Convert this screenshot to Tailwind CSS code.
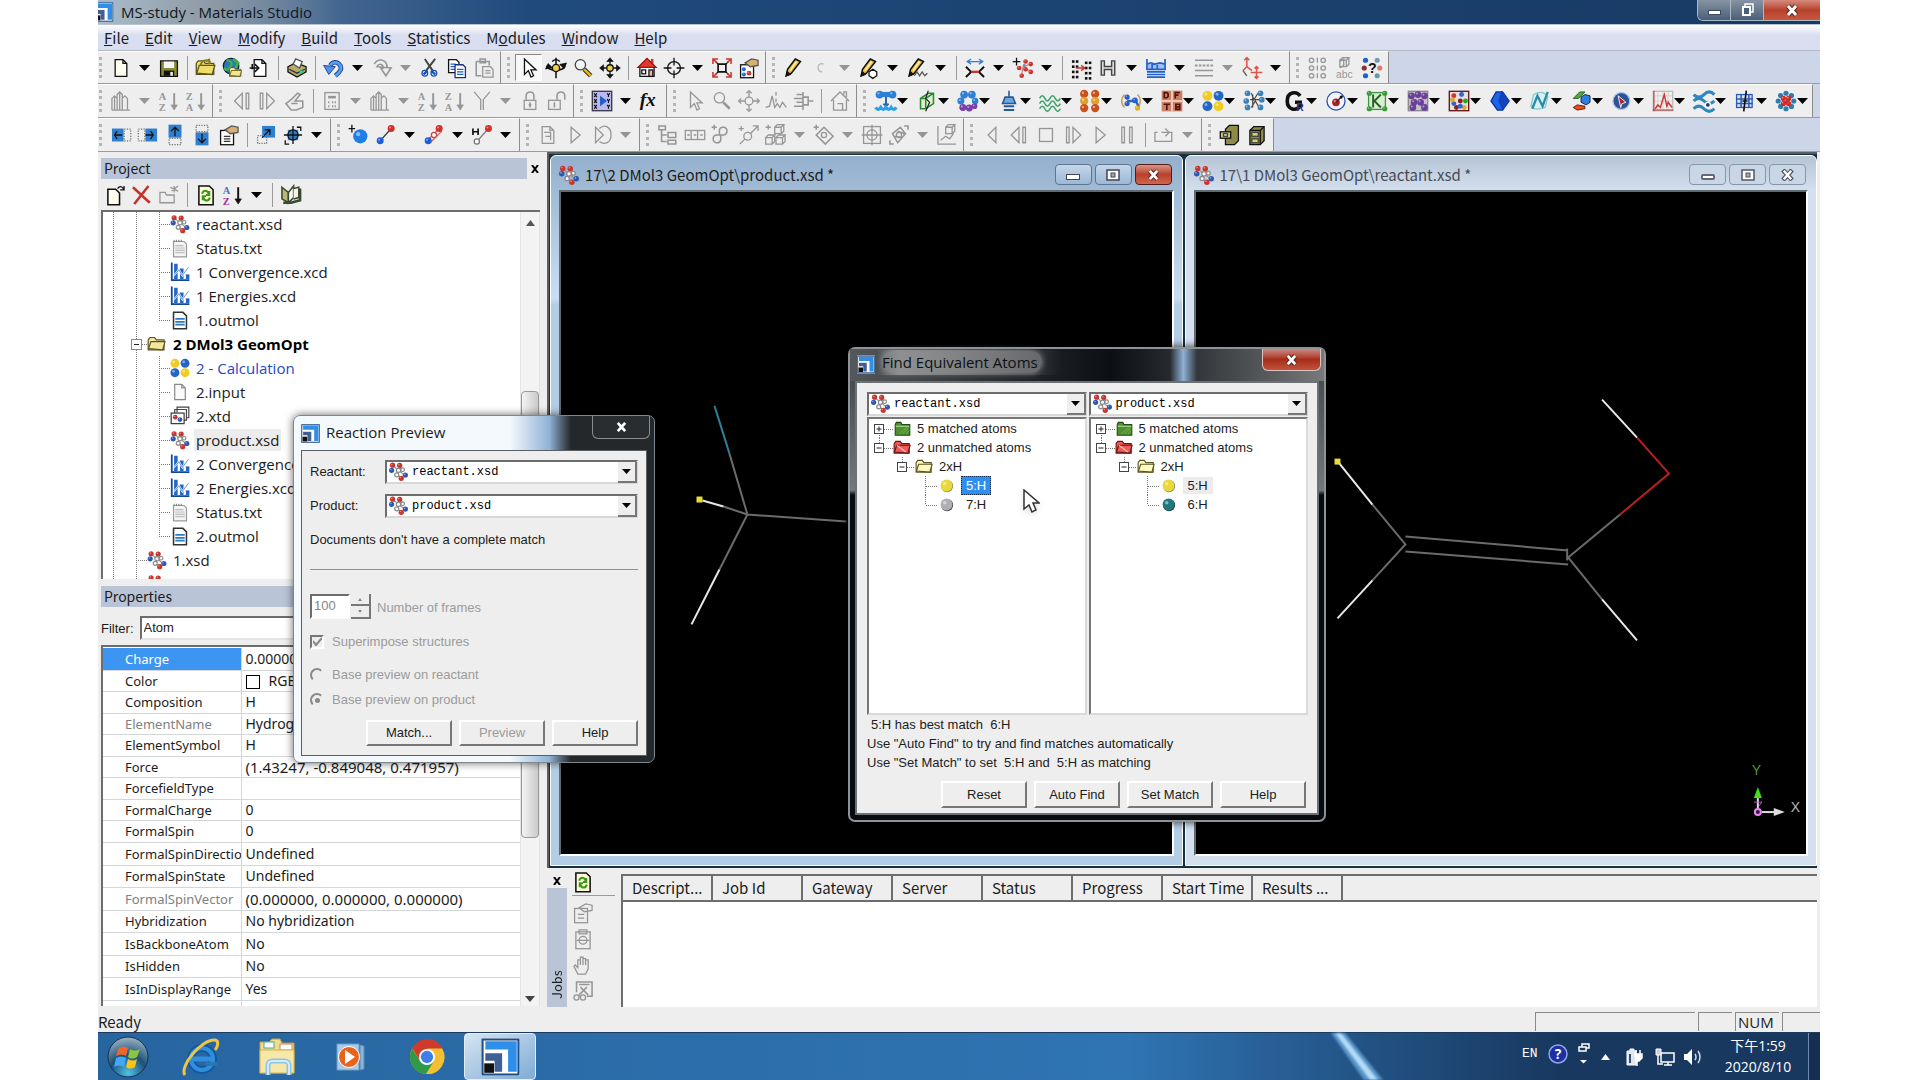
<!DOCTYPE html>
<html lang="en">
<head>
<meta charset="utf-8">
<title>MS-study - Materials Studio</title>
<script src="https://cdn.jsdelivr.net/npm/@tailwindcss/browser@4"></script>
</head>
<body class="bg-white font-['Open_Sans','Noto_Sans_CJK_SC',sans-serif] text-[15px] text-[#1c1c1c]">
<div class="pl-[98px] pr-[100px]">
<div class="relative flex h-screen min-h-[1080px] flex-col overflow-hidden bg-[#eeeeee]">

  <!-- Title bar -->
  <header class="flex h-[25px] shrink-0 items-start border-b border-[#b8c4d4] bg-linear-to-r from-[#6f8aa8] via-[#1f4a7c] via-25% to-[#173a63]">
    <div class="flex h-full items-center gap-[6px] bg-linear-to-r from-[#a9bccb] via-[#8f9ba6] via-45% to-transparent pr-[28px]">
      <svg class="h-[20px] w-[17px]" viewBox="4 0 15 18" data-icon="logo"></svg>
      <h1 class="text-[15px] leading-[24px] text-[#10161c]">MS-study - Materials Studio</h1>
    </div>
    <div class="ml-auto flex h-[21px] overflow-hidden rounded-bl-md border-b border-l border-[#aeb9c6]">
      <button aria-label="Minimize" class="flex w-[33px] items-center justify-center border-r border-[#aeb9c6] bg-linear-to-b from-[#8793a3] to-[#4a6079]"><span class="mt-[4px] h-[5px] w-[13px] border border-[#3b4a5c] bg-white"></span></button>
      <button aria-label="Restore" class="flex w-[33px] items-center justify-center border-r border-[#aeb9c6] bg-linear-to-b from-[#8793a3] to-[#4a6079]"><svg class="h-[15px] w-[15px]" viewBox="0 0 15 15"><path d="M5 4V1h8v8h-3" fill="none" stroke="#fff" stroke-width="1.500"/><rect x="3" y="4" width="7" height="8" fill="#4a6079" stroke="#fff" stroke-width="2"/></svg></button>
      <button aria-label="Close" class="flex w-[56px] items-center justify-center bg-linear-to-b from-[#d58a7c] via-[#b5412c] to-[#c9573f]"><svg class="h-[13px] w-[14px]" viewBox="0 0 14 13"><path d="M3 2l8 9M11 2l-8 9" stroke="#5a2a22" stroke-width="5"/><path d="M3 2l8 9M11 2l-8 9" stroke="#fff" stroke-width="3"/></svg></button>
    </div>
  </header>

  <!-- Menu bar -->
  <nav class="flex h-[26px] shrink-0 items-center gap-[16px] border-b border-[#b4b8c0] bg-linear-to-b from-white via-[#d9dff0] via-40% to-[#d8def0] pl-[6px] font-['Noto_Sans_CJK_SC',sans-serif] text-[15px] leading-[24px]">
    <a href="#"><u>F</u>ile</a><a href="#"><u>E</u>dit</a><a href="#"><u>V</u>iew</a><a href="#"><u>M</u>odify</a><a href="#"><u>B</u>uild</a><a href="#"><u>T</u>ools</a><a href="#"><u>S</u>tatistics</a><a href="#">M<u>o</u>dules</a><a href="#"><u>W</u>indow</a><a href="#"><u>H</u>elp</a>
  </nav>

  <!-- Toolbars, filled by the script -->
  <div id="bars" class="flex shrink-0 flex-col bg-[#ccd6e8]"></div>

  <!-- Work area -->
  <main class="flex min-h-0 flex-1">
    <aside class="flex w-[449px] shrink-0 flex-col pb-[4px] pl-[3px] pt-[6px]">
      <div class="flex h-[21px] items-center">
        <h2 class="h-full w-[426px] bg-[#b9c5d7] pl-[3px] font-['Noto_Sans_CJK_SC',sans-serif] text-[14px] leading-[20px]">Project</h2>
        <button aria-label="Close project panel" class="flex w-[16px] justify-center"><svg class="h-[8px] w-[8px]" viewBox="0 0 8 8"><path d="M1 0l6 8M7 0L1 8" stroke="#000" stroke-width="2"/></svg></button>
      </div>
      <div id="projbar" class="flex h-[31px] items-center"></div>
      <div class="mr-[7px] flex min-h-0 flex-1 overflow-hidden border-l-2 border-t-2 border-[#6d6d6d] bg-white">
        <ul id="tree" class="min-w-0 flex-1 overflow-hidden"></ul>
        <div class="flex w-[20px] flex-col items-center border-x border-[#e4e4e4] bg-[#f3f3f3]">
          <svg class="mt-[8px] h-[6px] w-[9px] shrink-0" viewBox="0 0 9 6"><path d="M0 6l4.500-6L9 6z" fill="#555"/></svg>
          <div class="mt-[165px] h-[150px] w-[18px] rounded-sm border border-[#989898] bg-linear-to-r from-[#f4f4f4] to-[#c9cacc]"></div>
        </div>
      </div>
      <h2 class="mt-[7px] h-[21px] w-[426px] shrink-0 bg-[#b9c5d7] pl-[3px] font-['Noto_Sans_CJK_SC',sans-serif] text-[14px] leading-[20px]">Properties</h2>
      <div class="flex h-[38px] shrink-0 items-center gap-[6px] font-['Liberation_Sans',sans-serif] text-[13px]">
        <label for="filter" class="pt-[6px]">Filter:</label>
        <input id="filter" value="Atom" class="mt-[3px] h-[24px] w-[380px] border-2 border-b-[#e4e4e4] border-l-[#6d6d6d] border-r-[#e4e4e4] border-t-[#6d6d6d] bg-white px-[2px]">
      </div>
      <div class="mr-[7px] flex h-[361px] shrink-0 overflow-hidden border-l-2 border-t-2 border-[#6d6d6d] bg-white pt-px">
        <div class="min-w-0 flex-1 overflow-hidden">
          <table class="w-full table-fixed border-collapse font-['Noto_Sans',sans-serif] text-[14px] leading-[18px]">
            <colgroup><col class="w-[138px]"><col></colgroup>
            <tbody id="props1"></tbody>
            <tbody id="props2"></tbody>
          </table>
        </div>
        <div class="flex w-[20px] flex-col items-center border-x border-[#e4e4e4] bg-[#f3f3f3]">
          <div class="h-[190px] w-[18px] rounded-sm border border-[#989898] bg-linear-to-r from-[#f4f4f4] to-[#c9cacc]"></div>
          <svg class="mb-[4px] mt-auto h-[6px] w-[10px]" viewBox="0 0 10 6"><path d="M0 0h10L5 6z" fill="#444"/></svg>
        </div>
      </div>
    </aside>

    <div class="flex min-w-0 flex-1 flex-col">
      <!-- Document windows -->
      <div class="mr-[3px] flex min-h-0 flex-1 gap-[2px] border-l-2 border-t-2 border-[#5a5e62] bg-[#17303c] pb-[2px] pl-px pt-px">
        <section class="flex min-w-0 flex-1 flex-col rounded-t-md border border-white bg-linear-to-b from-[#94b0cd] via-[#cadef2] via-20% to-[#b4cde6] to-21% px-[8px] pb-[9px]">
          <div class="flex h-[34px] shrink-0 items-center pt-[3px]">
            <svg class="h-[20px] w-[20px]" viewBox="0 0 16 16" data-icon="mol"></svg>
            <h2 class="ml-[6px] flex-1 truncate font-['Noto_Sans_CJK_SC',sans-serif] text-[15px] leading-[24px]">17\2 DMol3 GeomOpt\product.xsd *</h2>
            <div class="mr-[2px] flex gap-[3px]">
              <button aria-label="Minimize" class="flex h-[21px] w-[37px] items-center justify-center rounded-sm border border-[#5d7591] bg-linear-to-b from-[#c5d7ea] to-[#9cb7d5]"><span class="mt-[4px] h-[6px] w-[14px] border border-[#445] bg-white"></span></button>
              <button aria-label="Restore" class="flex h-[21px] w-[37px] items-center justify-center rounded-sm border border-[#5d7591] bg-linear-to-b from-[#c5d7ea] to-[#9cb7d5]"><svg class="h-[12px] w-[14px]" viewBox="0 0 14 12"><rect x="1" y="1" width="12" height="10" fill="#fff" stroke="#445" stroke-width="1.500"/><rect x="5" y="4" width="4" height="4" fill="#9ab" stroke="#445"/></svg></button>
              <button aria-label="Close" class="flex h-[21px] w-[37px] items-center justify-center rounded-sm border border-[#561c14] bg-linear-to-b from-[#d79587] via-[#b8402c] to-[#cf6550]"><svg class="h-[12px] w-[13px]" viewBox="0 0 14 13"><path d="M3 2l8 9M11 2l-8 9" stroke="#5a2a22" stroke-width="5"/><path d="M3 2l8 9M11 2l-8 9" stroke="#fff" stroke-width="3"/></svg></button>
            </div>
          </div>
          <div class="min-h-0 flex-1 border-2 border-b-white border-l-[#5f6a72] border-r-white border-t-[#5f6a72] bg-black">
            <svg class="h-full w-full" viewBox="561 191 610 663" fill="none" stroke-width="2">
              <path d="M714 405l15 48" stroke="#2f7f98"/><path d="M729 453l18 61 99 7M747 514l-28 55M747 514l-24-8" stroke="#6b6b6b"/>
              <path d="M719 569l-28 55M702 500l21 6" stroke="#e8e8e8"/><rect x="696" y="496" width="6" height="6" fill="#e8dc3a"/>
            </svg>
          </div>
        </section>
        <section class="flex min-w-0 flex-1 flex-col rounded-t-md border border-white bg-linear-to-b from-[#b6c4d5] to-[#d4e0ee] to-5% px-[8px] pb-[9px]">
          <div class="flex h-[34px] shrink-0 items-center pt-[3px]">
            <svg class="h-[20px] w-[20px]" viewBox="0 0 16 16" data-icon="mol"></svg>
            <h2 class="ml-[6px] flex-1 truncate font-['Noto_Sans_CJK_SC',sans-serif] text-[15px] leading-[24px] text-[#454c55]">17\1 DMol3 GeomOpt\reactant.xsd *</h2>
            <div class="mr-[2px] flex gap-[3px]">
              <button aria-label="Minimize" class="flex h-[21px] w-[37px] items-center justify-center rounded-sm border border-[#8796a8] bg-[#c9d6e6]"><span class="mt-[4px] h-[6px] w-[14px] rounded-xs border-2 border-[#667] bg-white"></span></button>
              <button aria-label="Restore" class="flex h-[21px] w-[37px] items-center justify-center rounded-sm border border-[#8796a8] bg-[#c9d6e6]"><svg class="h-[12px] w-[14px]" viewBox="0 0 14 12"><rect x="1" y="1" width="12" height="10" fill="#fff" stroke="#556" stroke-width="1.500"/><rect x="5" y="4" width="4" height="4" fill="#9ab" stroke="#556"/></svg></button>
              <button aria-label="Close" class="flex h-[21px] w-[37px] items-center justify-center rounded-sm border border-[#8796a8] bg-[#c9d6e6]"><svg class="h-[12px] w-[13px]" viewBox="0 0 14 13"><path d="M2 1l10 11M12 1L2 12" stroke="#556" stroke-width="5"/><path d="M3 2l8 9M11 2l-8 9" stroke="#fff" stroke-width="2.500"/></svg></button>
            </div>
          </div>
          <div class="min-h-0 flex-1 border-2 border-b-white border-l-[#5f6a72] border-r-white border-t-[#5f6a72] bg-black">
            <svg class="h-full w-full" viewBox="1195 191 610 663" fill="none" stroke-width="2">
              <path d="M1371 504l33 40-33 36M1404 536l163 14M1404 551l163 13M1566 548v12M1567 557l52-43M1567 557l34 42" stroke="#6b6b6b"/>
              <path d="M1338 463l33 41M1371 580l-35 38M1601 399l35 38M1601 599l35 41" stroke="#e8e8e8"/>
              <path d="M1619 514l49-41-32-36" stroke="#b92020"/><rect x="1333" y="458" width="6" height="6" fill="#e8dc3a"/>
              <path d="M1757 808v-10" stroke="#ddd"/><path d="M1757 787l-4 11h8z" fill="#3fe01a"/><path d="M1761 812h14" stroke="#ddd"/><path d="M1784 812l-11-4v8z" fill="#ddd"/>
              <path d="M1753 802h8l-3 4" stroke="#c050d0" stroke-width="1"/><circle cx="1757" cy="812" r="3" fill="#400a50" stroke="#e58af0"/>
              <text x="1751" y="775" fill="#4f9a2c" font-family="Liberation Sans" font-size="14">Y</text>
              <text x="1790" y="812" fill="#b8b8b8" font-family="Liberation Sans" font-size="14">X</text>
            </svg>
          </div>
        </section>
      </div>

      <!-- Jobs -->
      <section class="flex h-[142px] shrink-0 pb-[3px] pr-[3px] pt-[6px]">
        <div class="flex w-[20px] flex-col items-center">
          <button aria-label="Close jobs panel" class="flex h-[14px] shrink-0 items-center"><svg class="h-[8px] w-[8px]" viewBox="0 0 8 8"><path d="M1 0l6 8M7 0L1 8" stroke="#000" stroke-width="2"/></svg></button>
          <h2 class="flex w-full flex-1 items-center justify-start bg-[#b9c5d7] pt-[8px] font-['Noto_Sans_CJK_SC',sans-serif] text-[13px] leading-[20px] rotate-180 [writing-mode:vertical-rl]">Jobs</h2>
        </div>
        <div id="jobbar" class="ml-[5px] flex w-[49px] flex-col"></div>
        <div class="min-w-0 flex-1 border-l-2 border-t-2 border-[#6d6d6d] bg-white">
          <table class="w-full table-fixed border-collapse font-['Noto_Sans_CJK_SC',sans-serif] text-[15px]">
            <colgroup><col class="w-[89px]"><col class="w-[90px]"><col class="w-[90px]"><col class="w-[90px]"><col class="w-[90px]"><col class="w-[90px]"><col class="w-[90px]"><col class="w-[90px]"><col></colgroup>
            <thead><tr id="jobhead" class="h-[25px] border-b-2 border-[#6d6d6d] bg-[#eeeeee]"></tr></thead>
          </table>
        </div>
      </section>
    </div>
  </main>

  <!-- Status bar -->
  <footer class="flex h-[22px] shrink-0 items-center gap-[3px] font-['Noto_Sans_CJK_SC',sans-serif] text-[15px] leading-[20px]">
    <span class="flex-1 pt-px">Ready</span>
    <span class="h-[19px] w-[160px] border-l border-t border-[#8a8a8a]"></span>
    <span class="h-[19px] w-[34px] border-l border-t border-[#8a8a8a]"></span>
    <span class="h-[19px] w-[44px] border-l border-t border-[#8a8a8a] pl-[2px] font-['Open_Sans',sans-serif] leading-[18px]">NUM</span>
    <span class="h-[19px] w-[38px] border-l border-t border-[#8a8a8a]"></span>
  </footer>

  <!-- Taskbar -->
  <div class="flex h-[48px] shrink-0 border-t border-[#1b3a5e] bg-linear-to-r from-[#27659f] via-[#2f74b3] via-60% to-[#18385f] to-85%">
    <button aria-label="Start" class="flex w-[60px] items-center justify-center"><svg class="h-[42px] w-[44px]" viewBox="0 0 44 42" data-icon="start"></svg></button>
    <button aria-label="Internet Explorer" class="flex w-[86px] items-center justify-center"><svg class="h-[40px] w-[40px]" viewBox="0 0 40 40" data-icon="ie"></svg></button>
    <button aria-label="Windows Explorer" class="flex w-[68px] items-center justify-center"><svg class="h-[38px] w-[40px]" viewBox="0 0 40 38" data-icon="explorer"></svg></button>
    <button aria-label="Media Player" class="flex w-[78px] items-center justify-center"><svg class="h-[32px] w-[32px]" viewBox="0 0 32 32" data-icon="wmp"></svg></button>
    <button aria-label="Chrome" class="flex w-[74px] items-center justify-center"><svg class="h-[36px] w-[36px]" viewBox="0 0 38 38" data-icon="chrome"></svg></button>
    <button aria-label="Materials Studio" class="flex w-[72px] items-center justify-center rounded-sm border border-[#e3edf6] bg-linear-to-br from-[#d6e4f1] to-[#7fabd5]"><svg class="h-[38px] w-[39px]" viewBox="0 0 18 18" preserveAspectRatio="none" data-icon="logo"></svg></button>
    <svg class="ml-[790px] h-full w-[80px] blur-[1px]" viewBox="0 0 80 47" preserveAspectRatio="none"><path d="M5 0h14l38 47H38z" fill="#6fb0e6" opacity=".7"/><path d="M9 0h6l37 47h-8z" fill="#b5dcf8"/></svg>
    <div class="ml-auto flex items-center text-white">
      <span class="w-[26px] pb-[6px] font-['Liberation_Mono',monospace] text-[13px]">EN</span>
      <svg class="mb-[6px] h-[20px] w-[20px]" viewBox="0 0 20 20"><circle cx="10" cy="10" r="9" fill="#1c2fa5" stroke="#8fa6e0" stroke-width="1.500"/><text x="10" y="15" text-anchor="middle" font-size="14" font-weight="bold" fill="#fff" font-family="Open Sans">?</text></svg>
      <svg class="ml-[10px] mb-[8px] h-[22px] w-[12px]" viewBox="0 0 12 22"><path d="M4 5V2h7v4H8" fill="none" stroke="#fff" stroke-width="1.500"/><rect x="1" y="5" width="7" height="4" fill="none" stroke="#fff" stroke-width="1.500"/><path d="M2 18h7l-3.500 3.500z" fill="#fff"/></svg>
      <svg class="ml-[11px] h-[6px] w-[9px]" viewBox="0 0 9 6"><path d="M0 6l4.500-6L9 6z" fill="#fff"/></svg>
      <svg class="ml-[15px] h-[20px] w-[18px]" viewBox="0 0 18 20"><path d="M2 4h3V2h4v2h2v14H2z" fill="#dfe6ec" stroke="#fff"/><path d="M5 7v9" stroke="#38506e" stroke-width="2"/><path d="M9 7h8v4l-3 3h-2v5M11 3v4M15 3v4" fill="#fff" stroke="#fff" stroke-width="1.500"/></svg>
      <svg class="ml-[12px] h-[20px] w-[20px]" viewBox="0 0 20 20"><rect x="6" y="6" width="13" height="9" fill="#1d3c63" stroke="#fff" stroke-width="1.500"/><path d="M9 18h8M13 15v3M3 8v9h5" fill="none" stroke="#fff" stroke-width="1.500"/><path d="M1 2h5v6H1z" fill="#ccd" stroke="#fff"/></svg>
      <svg class="ml-[8px] h-[18px] w-[19px]" viewBox="0 0 19 18"><path d="M1 6h3l5-5v16l-5-5H1z" fill="#fff"/><path d="M12 6q2 3 0 6M15 3q4 6 0 12" fill="none" stroke="#cfdbe8" stroke-width="1.500"/></svg>
      <div class="ml-[11px] w-[90px] pb-[2px] text-center font-['Open_Sans','Noto_Sans_CJK_SC',sans-serif] text-[14px] leading-[21px]">下午1:59<br>2020/8/10</div>
      <button aria-label="Show desktop" class="ml-[5px] h-full w-[12px] self-stretch border-l border-[#6f8bab] bg-[#142f52]"></button>
    </div>
  </div>

  <!-- Reaction Preview dialog -->
  <div role="dialog" aria-label="Reaction Preview" class="absolute left-[195px] top-[415px] w-[362px] rounded-[7px] border border-[#7d868e] bg-linear-to-r from-[#f4f9fd] from-60% via-[#8fb2d6] via-71% to-[#25282b] to-77% px-[7px] pb-[6px] shadow-[0_0_8px_rgba(0,0,0,0.6)]">
    <div class="flex h-[34px] items-start">
      <svg class="mt-[8px] h-[19px] w-[19px]" viewBox="0 0 18 18" data-icon="logo"></svg>
      <h2 class="ml-[6px] mt-[4px] text-[15px] leading-[24px]">Reaction Preview</h2>
      <button aria-label="Close" class="-mr-[3px] ml-auto flex h-[23px] w-[58px] items-center justify-center rounded-b-md border border-t-0 border-[#8a8d90] bg-[#2a2d30]"><svg class="h-[12px] w-[13px]" viewBox="0 0 14 13"><path d="M3 2l8 9M11 2l-8 9" stroke="#fff" stroke-width="3"/></svg></button>
    </div>
    <div class="flex h-[306px] flex-col border border-[#5a5f64] bg-[#eeeeee] px-[8px] pt-[9px] font-['Liberation_Sans',sans-serif] text-[13px] leading-[18px]">
      <div class="flex items-center justify-between"><label for="rp1">Reactant:</label>
        <div class="relative w-[253px]"><select id="rp1" class="h-[24px] w-full appearance-none border-2 border-b-[#d8d8d8] border-l-[#6d6d6d] border-r-[#d8d8d8] border-t-[#6d6d6d] bg-white pl-[25px] font-['Liberation_Mono',monospace] text-[12px] leading-[18px] text-black"><option>reactant.xsd</option></select>
        <svg class="pointer-events-none absolute left-[4px] top-[2px] h-[19px] w-[19px]" viewBox="0 0 16 16" data-icon="mol"></svg>
        <span class="pointer-events-none absolute right-[1px] top-[2px] flex h-[21px] w-[19px] items-center justify-center border-b-2 border-r-2 border-[#777] bg-[#eeeeee]"><svg class="h-[5px] w-[9px]" viewBox="0 0 9 5"><path d="M0 0h9L4.500 5z"/></svg></span></div></div>
      <div class="mt-[10px] flex items-center justify-between"><label for="rp2">Product:</label>
        <div class="relative w-[253px]"><select id="rp2" class="h-[24px] w-full appearance-none border-2 border-b-[#d8d8d8] border-l-[#6d6d6d] border-r-[#d8d8d8] border-t-[#6d6d6d] bg-white pl-[25px] font-['Liberation_Mono',monospace] text-[12px] leading-[18px] text-black"><option>product.xsd</option></select>
        <svg class="pointer-events-none absolute left-[4px] top-[2px] h-[19px] w-[19px]" viewBox="0 0 16 16" data-icon="mol"></svg>
        <span class="pointer-events-none absolute right-[1px] top-[2px] flex h-[21px] w-[19px] items-center justify-center border-b-2 border-r-2 border-[#777] bg-[#eeeeee]"><svg class="h-[5px] w-[9px]" viewBox="0 0 9 5"><path d="M0 0h9L4.500 5z"/></svg></span></div></div>
      <p class="mt-[13px]">Documents don't have a complete match</p>
      <hr class="mt-[20px] border-t border-[#8f8f8f]">
      <div class="mt-[24px] flex items-center text-[#9b9b9b]">
        <input id="frames" value="100" disabled class="h-[25px] w-[40px] border-2 border-b-white border-l-[#6d6d6d] border-r-white border-t-[#6d6d6d] bg-white pb-[3px] pl-[2px] text-[13px] text-[#858585]">
        <div class="ml-[1px] flex w-[20px] flex-col">
          <button disabled aria-label="More frames" class="flex h-[12px] items-center justify-center border-b-2 border-r-2 border-[#777]"><svg class="h-[3px] w-[4px]" viewBox="0 0 4 3"><path d="M0 3l2-3 2 3z" fill="#888"/></svg></button>
          <button disabled aria-label="Fewer frames" class="flex h-[13px] items-center justify-center border-b-2 border-r-2 border-[#777]"><svg class="h-[3px] w-[4px]" viewBox="0 0 4 3"><path d="M0 0l2 3 2-3z" fill="#888"/></svg></button>
        </div>
        <label for="frames" class="ml-[6px] pt-[3px]">Number of frames</label>
      </div>
      <div class="relative mt-[14px] flex items-center text-[#9b9b9b]">
        <input id="sup" type="checkbox" checked disabled class="h-[14px] w-[14px] appearance-none border-2 border-b-white border-l-[#777] border-r-white border-t-[#777]">
        <svg class="absolute left-[3px] top-[4px] h-[9px] w-[9px]" viewBox="0 0 9 9"><path d="M0 4l3 4 6-7" fill="none" stroke="#888" stroke-width="2"/></svg>
        <label for="sup" class="ml-[8px]">Superimpose structures</label>
      </div>
      <div class="mt-[15px] flex items-center text-[#9b9b9b]">
        <input id="b1" name="base" type="radio" disabled class="h-[14px] w-[14px] appearance-none rounded-full border-2 border-b-[#eee] border-l-[#888] border-r-[#eee] border-t-[#888]">
        <label for="b1" class="ml-[8px]">Base preview on reactant</label>
      </div>
      <div class="relative mt-[7px] flex items-center text-[#9b9b9b]">
        <input id="b2" name="base" type="radio" checked disabled class="h-[14px] w-[14px] appearance-none rounded-full border-2 border-b-[#eee] border-l-[#888] border-r-[#eee] border-t-[#888]">
        <span class="absolute left-[5px] top-[7px] h-[5px] w-[5px] rounded-full bg-[#888]"></span>
        <label for="b2" class="ml-[8px]">Base preview on product</label>
      </div>
      <div class="mt-[11px] flex justify-end gap-[7px]">
        <button class="h-[26px] w-[86px] border-2 border-b-[#777] border-l-white border-r-[#777] border-t-white">Match...</button>
        <button disabled class="h-[26px] w-[86px] border-2 border-b-[#777] border-l-white border-r-[#777] border-t-white text-[#9b9b9b]">Preview</button>
        <button class="h-[26px] w-[86px] border-2 border-b-[#777] border-l-white border-r-[#777] border-t-white">Help</button>
      </div>
    </div>
  </div>

  <!-- Find Equivalent Atoms dialog -->
  <div role="dialog" aria-label="Find Equivalent Atoms" class="absolute left-[750px] top-[347px] w-[478px] rounded-[7px] border-2 border-[#8d9296] bg-linear-to-b from-[#3e4144] via-[#75787b] via-30% to-[#080c0f] to-31% px-[5px] pb-[5px] shadow-[0_0_8px_rgba(0,0,0,0.8)]">
    <div class="-mx-[5px] flex h-[32px] items-start bg-linear-to-r from-[#55585b] via-[#0c0f14] via-55% to-[#77797b] px-[5px]">
      <svg class="ml-[2px] mt-[6px] h-[19px] w-[18px]" viewBox="0 0 18 18" data-icon="logo"></svg>
      <h2 class="ml-[2px] mt-[1px] bg-linear-to-r from-transparent via-[#8e9091] via-12% to-[#8e9091]/0 pl-[5px] pr-[24px] text-[15px] leading-[25px] text-[#0d1114]"><span class="-mr-[4px] rounded-full bg-[#8e9091]/60 py-px pr-[4px] shadow-[0_0_6px_#8e9091]">Find Equivalent Atoms</span></h2>
      <div class="ml-auto h-full w-[27px] bg-linear-to-r from-transparent via-[#8fb0d6] to-transparent"></div>
      <button aria-label="Close" class="-mr-[2px] ml-[65px] flex h-[22px] w-[59px] items-center justify-center rounded-b-md border border-t-0 border-[#d9c4c0] bg-linear-to-b from-[#c98a82] via-[#a72c1a] to-[#c2523c]"><svg class="h-[12px] w-[13px]" viewBox="0 0 14 13"><path d="M3 2l8 9M11 2l-8 9" stroke="#5a2a22" stroke-width="5"/><path d="M3 2l8 9M11 2l-8 9" stroke="#fff" stroke-width="3"/></svg></button>
    </div>
    <div class="border-2 border-[#6c7176] bg-[#eeeeee] pb-[5px] pl-[10px] pr-[9px] pt-[9px] font-['Liberation_Sans',sans-serif] text-[13px] leading-[19px]">
      <div class="flex gap-[2px]">
        <div class="relative flex-1"><select aria-label="First document" class="h-[24px] w-full appearance-none border-2 border-b-[#d8d8d8] border-l-[#6d6d6d] border-r-[#d8d8d8] border-t-[#6d6d6d] bg-white pl-[25px] font-['Liberation_Mono',monospace] text-[12px] leading-[18px] text-black"><option>reactant.xsd</option></select>
        <svg class="pointer-events-none absolute left-[4px] top-[2px] h-[19px] w-[19px]" viewBox="0 0 16 16" data-icon="mol"></svg>
        <span class="pointer-events-none absolute right-[1px] top-[2px] flex h-[21px] w-[19px] items-center justify-center border-b-2 border-r-2 border-[#777] bg-[#eeeeee]"><svg class="h-[5px] w-[9px]" viewBox="0 0 9 5"><path d="M0 0h9L4.500 5z"/></svg></span></div>
        <div class="relative flex-1"><select aria-label="Second document" class="h-[24px] w-full appearance-none border-2 border-b-[#d8d8d8] border-l-[#6d6d6d] border-r-[#d8d8d8] border-t-[#6d6d6d] bg-white pl-[25px] font-['Liberation_Mono',monospace] text-[12px] leading-[18px] text-black"><option>product.xsd</option></select>
        <svg class="pointer-events-none absolute left-[4px] top-[2px] h-[19px] w-[19px]" viewBox="0 0 16 16" data-icon="mol"></svg>
        <span class="pointer-events-none absolute right-[1px] top-[2px] flex h-[21px] w-[19px] items-center justify-center border-b-2 border-r-2 border-[#777] bg-[#eeeeee]"><svg class="h-[5px] w-[9px]" viewBox="0 0 9 5"><path d="M0 0h9L4.500 5z"/></svg></span></div>
      </div>
      <div class="mt-px flex gap-[2px]">
        <ul id="atoms1" class="h-[298px] flex-1 border-2 border-b-[#dadada] border-l-[#777] border-r-[#dadada] border-t-[#777] bg-white"></ul>
        <ul id="atoms2" class="h-[298px] flex-1 border-2 border-b-[#dadada] border-l-[#777] border-r-[#dadada] border-t-[#777] bg-white"></ul>
      </div>
      <div class="whitespace-pre"><p class="pl-[4px]">5:H has best match  6:H</p><p>Use "Auto Find" to try and find matches automatically</p><p>Use "Set Match" to set  5:H and  5:H as matching</p></div>
      <div class="mr-[2px] mt-[9px] flex justify-end gap-[7px]">
        <button class="h-[27px] w-[86px] border-2 border-b-[#777] border-l-white border-r-[#777] border-t-white">Reset</button>
        <button class="h-[27px] w-[86px] border-2 border-b-[#777] border-l-white border-r-[#777] border-t-white">Auto Find</button>
        <button class="h-[27px] w-[86px] border-2 border-b-[#777] border-l-white border-r-[#777] border-t-white">Set Match</button>
        <button class="h-[27px] w-[86px] border-2 border-b-[#777] border-l-white border-r-[#777] border-t-white">Help</button>
      </div>
    </div>
  </div>

  <!-- Mouse pointer -->
  <svg class="pointer-events-none absolute left-[925px] top-[489px] h-[25px] w-[17px] drop-shadow-md" viewBox="0 0 17 25"><path d="M1 1v19l5-4 3 7 4-2-3-7h6z" fill="#fff" stroke="#333" stroke-width="1.500"/></svg>
</div>
</div>

<script>
const p = (d, s, w = 1, f = 'none') => `<path d="${d}" stroke="${s}" stroke-width="${w}" fill="${f}"/>`;
const c = (x, y, r, f, s = 'none') => `<circle cx="${x}" cy="${y}" r="${r}" fill="${f}" stroke="${s}"/>`;
const r = (x, y, w, h, f, s = 'none') => `<rect x="${x}" y="${y}" width="${w}" height="${h}" fill="${f}" stroke="${s}"/>`;
const t = (x, y, n, s, f, w = 'bold', fam = 'Liberation Sans') => `<text x="${x}" y="${y}" font-size="${n}" fill="${f}" font-weight="${w}" font-family="${fam}">${s}</text>`;
const G = '#969696', K = '#111', B = '#1f5fd0', R = '#c8352c';
const page = (s = K, f = '#fff') => p('M3.500 1.500h6l3 3v10h-9zM9.500 1.500v3h3', s, 1, f);
const folder = (f, s = '#5a5420') => p('M.5 13V4.500l1.500-2h4l1.500 2h6.500V13z', s, 1, f) + p('M.8 12l2-6h12l-2 7z', s, 1, f);
const ball = (x, y, q, f) => c(x, y, q, f) + c(x - q * .3, y - q * .3, q * .3, '#fff7');
const pencil = p('M2 14l1-5 6-8 4 2-7 9z', K, 1.200, '#e8c040') + p('M5 10l5-7', '#fff3a0', 1.200) + p('M2 14l1-3 2 2z', K, 1, K);
const cube = (x, y, s = G, f = 'none') => p(`M${x} ${y + 2}h5v5h-5zM${x} ${y + 2}l2-2h5l-2 2M${x + 7} ${y}v5l-2 2`, s, 1, f);
const az = (a, b, s1, s2, s3) => t(0, 7, 8, a, s1, 'bold', 'Liberation Serif') + t(0, 15.500, 8, b, s2, 'bold', 'Liberation Serif') + p('M12 2v11', s3, 1.500) + p('M9.500 11h5l-2.500 4z', s3, .5, s3);
const I = {
  logo: r(0, 0, 18, 18, '#fff') + r(.7, .7, 16.600, 16.600, 'none', '#1f4e86') + p('M2 3.500h12.500V16', '#2f8fe8', 4) + p('M2 9h6v7', '#3f5f95', 3.500) + p('M2 6.200h9.300V16', '#fff', 1) + r(1.500, 12, 4.500, 4.500, K),
  mol: p('M3 3l5 4 3-2M8 7l-1 4 3 2M8 7l5 4', '#999') + ball(3, 2.700, 2.200, R) + ball(9, 2.900, 2.200, R) + ball(2.200, 7, 2.200, '#2f57b0') + ball(13.800, 11, 2.200, '#2f57b0') + c(8, 7, 1.800, '#fff', '#888') + c(6.500, 10.800, 1.700, '#fff', '#888') + c(11.500, 6.500, 1.500, '#fff', '#888') + ball(10.300, 13.700, 2.200, R),
  page: page(K, '#fffef0'), blank: page('#888', '#fafafa'),
  save: p('M1.500 2.500h13v12h-13z', K, 1, '#8a8a30') + r(4, 3, 8, 5, '#f4f4f4') + r(4, 10, 8, 4, K) + r(9, 11, 2, 3, '#eee'),
  open: folder('#f0dc6a') + p('M4 6c0-4 5-5 7-3l-1 2M8 3l3-2', '#8a7a10', 1.500), folder: folder('#f3e6a0'), folderO: folder('#fffbc0'),
  folderG: p('M1.500 14V4.500l1-2h4l1 2h7V14z', '#234a12', 1, '#4f8f30') + p('M2 6h12', '#a8d890', 1) + p('M8 13l6-6M11 13l3-3M5 13l7-6', '#7db860', .7), folderR: folder('#f05a55', '#6a1512') + p('M3 6l8 6', '#ffc0b8', 1),
  web: c(6.500, 6.500, 6, '#2c78b0', '#124') + p('M3 2c3 0 5 2 3 5s-3 3-5 1M8 1l4 3-2 4', '#3fae4f', 2) + '<g transform="translate(5 6) scale(.65)">' + folder('#f5e58a') + '</g>',
  docin: page() + p('M0 8h6M2 5v4M4 5l3 3-3 3', K, 1.200), print: p('M1 7l6-3 8 3v4l-7 4-7-4z', K, 1, '#b5ae6a') + p('M5 5l2-4 5 2-2 5z', '#555', 1, '#fff') + p('M2 9l6 3 6-3', '#333') + r(10, 10, 3, 2, '#3c9'),
  undo: p('M9 14c4-3 6-6 3-9c-2-2-5-2-7 1', '#1a3f90', 3.500) + p('M9 14c4-3 6-6 3-9c-2-2-5-2-7 1', '#5a9cf2', 2.200) + p('M0 6l9 1-5 6z', '#1a3f90', .7, '#4f93ee'), redo: p('M2 5c3-5 10-4 10 3M15 8l-4 6-4-6h2c0-3-3-4-5-1z', G, 1.200),
  cut: p('M4 1l6 9M12 1L5 10', '#444', 1.500) + c(4, 12, 2.200, 'none', '#1b50b8') + c(11, 12, 2.200, 'none', '#1b50b8') + p('M3 13l3-3M12 13l-3-3', '#1b50b8', 1.800),
  copy: p('M1.500 1.500h6l2 2v8h-8z', K, 1, '#fff') + p('M3 5h4M3 7h4M3 9h4', B) + p('M6.500 5.500h6l2 2v8h-8z', '#1c2f80', 1, '#fff') + p('M8 9h5M8 11h5M8 13h5', B),
  paste: p('M2 3h10v3M2 3v11h4M5 1h4v3H5z', G, 1.200) + p('M7 7h6l2 2v6H7zM9 10h4M9 12h4', G),
  ptr: p('M4.500 1v12l3-3 2 5 2-1-2-4.500h4z', K, 1, '#fff'), gptr: p('M4.500 1v12l3-3 2 5 2-1-2-4.500h4z', G),
  rot: p('M8 0v16M1 6c0 5 14 5 14 0', K, 1.200) + c(8, 8, 2.800, '#f0d040', K) + p('M5 3q3-3 6 0', K) + p('M0 9l2-4 3 3M11 5l3 3 2-4', K, 1, K),
  zoom: p('M9 9l5 5', '#222', 3.500) + p('M9 9l5 5', '#e0b820', 2) + c(6, 5.500, 4, '#f0f6fa', '#444'), gzoom: p('M9 9l5 5', G, 2) + c(6, 5.500, 4, 'none', G),
  move: p('M8 1v14M1 8h14', K) + p('M8 0l2.500 3h-5zM8 16l2.500-3h-5zM0 8l3-2.500v5zM16 8l-3-2.500v5z', K, .5, K) + c(8, 8, 2.500, '#f0d040', K),
  gmove: p('M8 1v14M1 8h14M6 2l2-2 2 2M6 14l2 2 2-2M2 6L0 8l2 2M14 6l2 2-2 2', G) + c(8, 8, 3, '#eee', G),
  home: r(11, 1, 2, 4, '#c33') + p('M2.500 7.500h11v7h-11z', K, 1, '#fff') + p('M1 7.500L8 .5l7 7z', '#911', 1, '#e03a2a') + r(9.500, 9.500, 3, 5, '#f0b0a8', K) + r(4, 9.500, 3, 3, '#fff', K),
  ghome: p('M1 8l7-7 7 7M3 7v8h10V7M6 10h4v5M11 3V1h2v4', G),
  target: c(8, 8, 5, 'none', K) + p('M8 0v6M8 10v6M0 8h6M10 8h6', K),
  fit: p('M5 5h6v6H5z', K, 1.300) + p('M5 5L3 3M11 5l2-2M5 11l-2 2M11 11l2 2', K) + p('M1 5V1h4M11 1h4v4M15 11v4h-4M5 15H1v-4M1 1l3 3M15 1l-3 3M1 15l3-3M15 15l-3-3', R, 1.200),
  disp: r(1.500, 5.500, 10, 10, '#fff', K) + p('M5 4l5-3 5 1v4l-6 1z', '#555', 1, '#d8b070') + ball(4, 9, 1.500, B) + ball(8, 12, 1.800, R) + ball(4, 13, 1.500, B),
  pencil, gc: p('M10 5c-5-2-6 6-1 6', '#b5b5b5'), pring: pencil + p('M11 9l3 2v3l-3 2-3-2v-3z', K, 1, '#fff'), pzig: pencil + p('M6 14l2-3 2 3 2-3 2 3 2-2', '#555'),
  measure: p('M2 3h12M5 1L2 3l3 2M11 1l3 2-3 2', '#2f7fe0') + p('M1 7l4 4-4 4M15 7l-4 4 4 4', K, 1.500) + p('M5 11h6', R, 1.800),
  atoms: p('M0 3h6M3 0v6', K) + p('M8 7l6-2M8 7l-1 6M8 7l6 4', '#c88') + [[10, 3], [14, 5], [5, 8], [10, 9], [14, 11], [7, 14]].map(a => ball(a[0], a[1], 1.800, R)).join('') + ball(9, 6, 1.200, '#88a'),
  sym: [1, 4, 11, 14].map(x => [2, 6, 10, 14].map(y => r(x, y - 1 + (x % 3), 2, 2, K)).join('')).join('') + p('M4 8h7M8 6l3 2-3 2', R), hh: p('M4 2v12M12 2v12M4 8h8', '#444', 3.500) + p('M4 3v10M12 3v10M4 8h8', '#ddd', 1.300),
  tablei: r(1, 5, 14, 4, '#9fc0f0') + p('M1 1v8h14V1M1 5l3-1 3 1 4-1 4 1M5 4v5M9 4v5', B, 1.300) + p('M1 11h14M1 13h14M1 15h14', B, 1.300),
  dash: p('M1 2h14M1 10h14M1 14h14', G, 1.200) + '<path d="M1 6h14" stroke="#9a9a9a" stroke-width="1.500" stroke-dasharray="2 1"/>',
  redm: p('M4 0v7l-3 3M4 7l4 3M2 2l2-2 2 2', '#d8574d', 1.200) + p('M11.500 7v9M7 11.500h9M10 8.500l1.500-1.500L13 8.500M10 14.500l1.500 1.500 1.500-1.500', '#d8574d', 1.200) + p('M1 10l3 4', '#555'),
  s1: [3, 12].map(x => [2, 8, 14].map(y => c(x, y, 1.700, 'none', G)).join('')).join('') + p('M7.500 0v4M7.500 6v4M7.500 12v4', G), s2: cube(4, 0) + p('M4 3l3-2v5l-3 2', G) + t(1, 15.500, 8, 'abc', G, 'normal'),
  s3: c(3, 2, 2, B) + c(12, 2, 2, '#79b') + c(2, 8, 2, '#833') + c(14, 8, 2, '#d77') + c(3, 14, 2, B) + c(12, 14, 2, '#69a') + t(5, 12, 11, '?', K),
  bars: p('M1 15V6l2-2 2 2v9M5 15V3l2-2 2 2v12M9 6l2-2 2 2v9M1 15h14M3 5v10M7 2v13', G), az: az('A', 'Z', '#4a74c8', '#a03090', K), gaz: az('A', 'Z', G, G, G), gza: az('Z', 'A', G, G, G),
  bk: p('M9 2v12L3 8zM12 2h2v12h-2z', G), fw: p('M7 2v12l6-6zM2 2h2v12H2z', G), hand: p('M1 10l4-3 5-5 2 1-4 5h6v5l-5 2H5zM5 10h5', G, 1.200), calc: r(2.500, 1.500, 11, 13, 'none', G) + r(5, 4, 6, 2, G) + p('M5 9h1M8 9h1M10 9h1M5 12h1M8 12h1M10 12h1', G, 1.500),
  yy: p('M2 1l5 6v8M14 1L9 7v8', G), lock: r(3.500, 7.500, 9, 7, 'none', G) + p('M5 7V4c0-4 6-4 6 0v3M8 9v4M7 11h2', G, 1.200), unlock: r(1.500, 7.500, 9, 7, 'none', G) + p('M8 7V4c0-4 6-4 6 0v3M6 9v4', G, 1.200),
  xy: r(.5, .5, 15, 15, '#b9b8f0', '#334') + p('M2 2l2 3M4 2L2 5M2 6.500l2 3M4 6.500l-2 3M2 11l2 3M4 11l-2 3M12 2l1 1.500L14 2M13 3.500V5M12 6.500L13 8l1-1.500M13 8v1.500M12 11l1 1.500 1-1.500M13 12.500V14', K, .9) + p('M7 5l4 3-4 3z', B, 1, B), fx: t(0, 12, 15, '<tspan font-style="italic">fx</tspan>', K, 'bold', 'Liberation Serif'),
  peaks: p('M0 13l3-1 2-8 2 9 2-3 2 3 2-4 3 4M8 1v3M8 6v3', G), treeh: p('M8 1v14M3 3h5M1 6h7M3 9h5M1 12h7M8 5h4v6H8M12 8h4', G, 1.200),
  d1: p('M8 4v8M6 10l2 2 2-2', '#26a', 1.500) + p('M3 3h10', '#2d7fd6', 4) + ball(3, 3, 3, '#2d7fd6') + ball(13, 3, 3, '#2d7fd6') + p('M0 13q2 3 4 0q2 3 4 0q2 3 4 0q2 3 4 0', '#2d9fe6', 2.500),
  d2: p('M3 6l6-4h4v8l-6 4H3zM3 6h4v8M7 6l6-4', '#2c8a2c', 1.200, '#e0f0d8') + p('M9 0L7 6l3 3-3 7', '#222', .9), d3: ball(5, 3, 3, '#2d7fd6') + ball(11, 3, 3, '#2d7fd6') + ball(2.500, 8, 2.700, '#2d7fd6') + ball(13.500, 8, 2.500, '#2d7fd6') + ball(4, 13, 2.700, '#7a3fa8') + ball(9, 13.500, 2.700, '#7a3fa8') + ball(13, 12, 2.200, '#7a3fa8'),
  d4: p('M8 0v5M5 5h6l2 5H3z', '#245a9a', 1.200, '#6fa8d8') + p('M4 12h8M4 15h8', '#245a9a', 1.500), d5: p('M0 6q2-4 4 0t4 0t4 0t4 0M0 10q2-4 4 0t4 0t4 0t4 0M0 14q2-4 4 0t4 0t4 0t4 0', '#3fa06a', 1.200),
  d6: [3.5, 12].map(x => [2.500, 8, 13.500].map(y => ball(x, y, 3.200, y == 8 ? '#e0a030' : '#c8501c')).join('')).join(''), d7: p('M3 3C0 6 0 10 3 13M13 3c3 3 3 7 0 10', '#c8a060', 1.300) + p('M5 8h7M12 8l2 5', '#36a', 1.800) + ball(5, 5, 2, B) + ball(5, 10, 2, B) + ball(11, 7.500, 2.200, B) + ball(13, 13.500, 2, '#e0b020'),
  d8: r(0, 0, 16, 16, '#c98068') + p('M8 0v16M0 8h16', '#f0c8b8', 1.500) + p('M2 1.500v4h2l1-1v-2l-1-1zM10.500 6V1.500H14M10.500 3.500H13M1.500 10.500h5M4 10.500V15M11 10.500v4h3v-4zM11 12.500h3', '#5a1208', 1.300),
  calcn: ball(3.700, 4, 3.800, '#f0cc20') + ball(12.300, 4, 3.800, '#2465c8') + ball(3.700, 12, 3.800, '#2465c8') + ball(12.300, 12, 3.800, '#f0cc20') + c(8, 8, 1.500, '#fff'),
  d10: p('M6 2l2 5 3-5M5 7h7M6 13l3-5 3 5M7 3v10', '#444', .9) + [[3, 2], [13, 2], [2, 8], [14, 7], [3, 13], [13, 13]].map(a => ball(a[0], a[1], 2.200, '#3a80b8')).join(''), d11: p('M12 4C9 0 2 1 2 8s7 8 10 4V9H8', K, 2.800) + t(9, 15.500, 8, 'R', '#338'),
  d12: c(8, 8, 7, '#f4f6ff', '#2a4fb0') + ball(8, 9, 3, '#b02020') + p('M8 9l5-5', '#333', 1) + c(12, 5, 1.200, K), d13: r(1.500, 1.500, 13, 13, '#d8efd0', '#3a9a3a') + p('M5 3v10M11 3L6 8l5 5', '#285f28', 1.500) + [2, 14].map(x => [2, 14].map(y => ball(x, y, 2, '#3a9a3a')).join('')).join(''),
  d14: r(.5, .5, 15, 15, '#c4c0c8', '#888') + [[3, 4], [8, 3], [13, 4], [5, 9], [10, 9], [4, 13], [13, 13]].map(a => ball(a[0], a[1], 2.600, '#6a3f98')).join(''), d15: r(.5, .5, 15, 15, '#e8e0e0', '#5a1010') + [['#c33', 4, 4], ['#36c', 10, 3], ['#2a2', 13, 8], ['#822', 9, 8], ['#36c', 4, 10], ['#da2', 12, 13], ['#822', 6, 13], ['#36c', 9, 12], ['#da2', 3, 7]].map(a => c(a[1], a[2], 1.900, a[0])).join(''),
  d16: p('M5 1h5l5 7-5 7H6L1 8z', '#0a2f9a', 1, '#1e63e8') + p('M9 1L7 8l3 7h0l5-7-5-7z', '#0a3fc0', .5, '#1243b8'), d17: p('M3 3q8-4 11 2l-2 8q-8 3-11-1z', '#8cc', 1, '#d8f0f4') + p('M2 14L6 4l4 8 4-11', '#2a8aa8', 1.800),
  d18: p('M2 6l5-5h4L6 6z', '#252', .7, '#4fae3a') + p('M8 5l3-2 4 1v5l-3 2-4-2z', '#124', .7, '#2f7fe0') + p('M2 13l3-2 6 1v2l-6 1z', '#611', .7, '#e05020'), d19: c(7.500, 8, 6.500, '#2c5298', '#a8c0e0') + p('M5 4l6 5-3 1-1 3z', '#fff', .7, '#b02020'),
  d20: r(.5, .5, 15, 15, '#f4eeee', '#bbb') + p('M1 4h14M1 8h14M4 1v14M8 1v14M12 1v14', '#ccc', .6) + p('M0 15h16M1 0v16', '#a33', .8) + p('M2 14l2-3 2 2 3-10 2 9 1-3 3 4', '#c33', 1.100), d21: p('M0 3q4 4 8 0t8 0M0 8q4-4 8 0t8 0M0 14q4-4 8 0t8 0', '#2f86c0', 2.400) + c(11, 11, 2, '#247', '#fff'),
  d22: r(1.500, 3, 12, 10, '#d8e4f8', '#2a5ab8') + p('M1 6.500h13M1 10h13M5 3v10M11 3v10', '#2a5ab8', 1.200) + p('M9 0L8 8l-1 8M6 8h4', K, 1.300), d23: [0, 45, 90, 135, 180, 225, 270, 315].map(a => c((8 + 6 * Math.cos(a / 57.3)).toFixed(1), (8 + 6 * Math.sin(a / 57.3)).toFixed(1), 2, '#2f7cb0')).join('') + [[6, 6], [10, 6], [6, 10], [10, 10], [8, 8]].map(a => ball(a[0], a[1], 2, '#d02a28')).join(''),
  l1: r(1, 3, 9, 10, '#2f7fd0') + p('M3 8h6M5 5L3 8l2 3', K) + '<rect x="10.500" y="3.500" width="5" height="9" fill="none" stroke="#777" stroke-dasharray="1 1"/>', l2: r(6, 3, 9, 10, '#2f7fd0') + p('M6 8h6M10 5l2 3-2 3', K) + '<rect x=".5" y="3.500" width="5" height="9" fill="none" stroke="#777" stroke-dasharray="1 1"/>',
  l3: r(3, 0, 10, 10, '#2f7fd0') + p('M8 9V2M5 5l3-3 3 3', K) + '<rect x="3.500" y="10.500" width="9" height="5" fill="none" stroke="#777" stroke-dasharray="1 1"/>', l4: r(3, 6, 10, 10, '#2f7fd0') + p('M8 7v7M5 11l3 3 3-3', K) + '<rect x="3.500" y=".5" width="9" height="5" fill="none" stroke="#777" stroke-dasharray="1 1"/>',
  l5: r(1.500, 4.500, 10, 11, '#fff', K) + p('M4 9h5M4 11h5M4 13h5', '#333') + p('M5 4l5-3 5 1v4l-6 1z', '#555', 1, '#d8b070'), l6: r(5, 1, 10, 9, '#2f7fd0') + p('M5 10l6-6M7 4h4v4', K) + '<rect x="1.500" y="8.500" width="7" height="6" fill="none" stroke="#777" stroke-dasharray="1 1"/>', l7: r(4, 4, 8, 8, '#2f7fd0') + c(8, 8, 4, 'none', K) + p('M8 1v14M1 8h14M11 2h3v3M5 15H2v-3', K),
  b1: p('M0 3h5M2.500 0v6', K) + ball(9, 9, 5.500, '#1f7fe8'), b2: p('M4 12l8-9', '#333') + ball(3.500, 12.500, 2.700, '#1d5fd0') + ball(12, 3, 2.700, '#d03028'), b3: p('M3 12l9-9M5 14l9-9', '#c66') + ball(3.500, 12.500, 2.700, '#1d5fd0') + ball(12, 3, 2.700, '#d03028') + c(8, 8, 2, '#fff', '#c44'), b4: p('M1 3v5M5 3v5M1 5.500h4', K, 1.300) + p('M5 12l7-8', '#777') + c(4, 13, 2, '#fff', '#777') + ball(13, 3, 2.700, '#d03028'),
  g1: page(G, 'none') + p('M5 6h5v6M6 9h4', G), play: p('M5 2l7 6-7 6z', G), g3: p('M3 2l6 6-6 6zM6 3c4-4 9-1 9 5s-5 8-9 5', G),
  h1: p('M1 1h5v3H1zM3 4v9h4M3 8h4M8 6h6v4H8zM8 12h6v3H8z', G, 1.200), h2: r(.5, 4.500, 15, 7, 'none', G) + p('M5 5v6M10 5v6M2 8h2M7 8h2M12 8h2', G), h3: p('M0 2h4M2 0v4M6 8v-4a3 3 0 1 1 3 4H4a3 3 0 1 0 3 4V8', G, 1.200), h4: p('M0 3h4M2 1v4M9 7l6-6M11 1h4v4M1 15l4-4', G) + c(7, 9, 3, 'none', G), h5: p('M0 2h4M2 0v4', G) + cube(7, 0) + cube(0, 8) + cube(8, 8), h6: p('M0 2h4M2 0v4M8 2l7 7-6 6-7-7z', G, 1.200) + c(8, 8, 2, 'none', G), h7: r(1.500, 1.500, 13, 13, 'none', G) + p('M8 0v16M0 8h16', G) + c(8, 8, 4, 'none', G), h8: p('M3 7l6-5 4 5-6 7zM1 12v3h3M12 1h3v3M5 9l5 1M7 5l5 2', G, 1.200) + c(8, 8, 2, 'none', G), h9: p('M1 1v14h14M3 12l4-3 3 2 3-4', G) + cube(7, 0),
  k1: p('M11 2v12L5 8z', G), k2: p('M8 2v12L2 8zM11 2h2v12h-2z', G), k3: r(3, 3, 10, 10, 'none', G), k4: p('M8 2v12l6-6zM3 2h2v12H3z', G), k6: p('M4 2h2v12H4zM10 2h2v12h-2z', G), k7: p('M3 6H1v7h13V6h-3M6 6h5M9 3l3 3-3 3', G),
  cab: p('M2.500 4.500l3-3h8v11l-3 3h-8z', K, 1, '#8f8a48') + p('M2.500 4.500h8v11M10.500 4.500l3-3', K) + r(4, 6, 5, 3, '#d4d08a', '#443') + r(4, 11, 5, 3, '#d4d08a', '#443'), cab1: p('M4.500 3.500l3-3h7v12l-3 3h-7z', K, 1, '#8f8a48') + r(.5, 5.500, 8, 5, '#c8c478', K) + r(3, 7, 3, 2, '#fff', '#443'),
  newdoc: p('M2.500 3.500h6l3 3v9h-9z', K, 1.200, '#fffef0') + p('M10 3c2-3 4-1 5 1M15 1v3h-3', K), del: p('M1 2l13 12M13 1L2 15', '#c4342a', 2), gfold: p('M1 6h4l1 2h6v6H1zM10 5l5-4M12 1v5M9 2l6 3', G), refresh: p('M2.500 1h8l3 3v11.500h-11z', K, 1.200, '#fffbd8') + p('M5 7c1-3 4-3 5 0M10.500 5v3H8M11 10c-1 3-4 3-5 0M5.500 12V9H8', '#3a9a1a', 1.600), book: p('M2 14h6l7-2V3', '#3a4a30', 2) + p('M1 2l5 4v8l-5-3z', '#3a4a30', 1.200, '#b8b878') + p('M6 6l4-5v9l-4 4z', '#3a4a30', 1.200, '#fff') + p('M10 3l4-1v8l-4 1', '#3a4a30', 1.200, '#f8f6e8'),
  txt: p('M2.500 2.500h9l2 2v11h-11z', '#999', 1, '#f4f4f4') + p('M4 6h7M4 8h8M4 10h8M4 12h8', '#bbb') + p('M3 1v2M5 1v2M7 1v2M9 1v2', '#888'), chart: p('M1 0v15h15', '#124a90', 1.500) + r(3, 1, 3, 13, '#2465c8') + r(8, 5, 3, 9, '#2465c8') + r(13, 10, 3, 4, '#2465c8') + p('M3 11l4-5 3 5 5-7', '#fff', 1.500) + p('M3 11l4-5 3 5 5-7', '#4a80c8', .7), outmol: p('M2.500 1.500h8l3 3v11h-11z', '#333', 1.300, '#fff') + p('M4 7h8M4 9.500h8M4 12h8', '#2a7ac8', 1.500), xtd: p('M5.500 5V.5h10v9H13M3.500 6V2.500h10v9H11', '#444', 1, '#fff') + r(.5, 5.500, 11, 9, '#fff', '#333') + ball(4, 9, 2, R) + ball(8, 11, 2, '#2f57b0'),
  j2: r(1.500, 4.500, 10, 11, 'none', G) + p('M4 9h5M4 12h5M5 4l5-3 5 1v4l-6 1z', G), j3: r(2.500, 2.500, 11, 13, 'none', G) + p('M5 1h6v3H5zM3 9h10', G) + c(8, 9, 3, 'none', G), j4: p('M4 15l-3-6 1-1 2 2V4h2v4V2h2v6V3h2v5V4h2v7l-2 4z', G), j5: p('M3 9V1h12v11h-4M5 3h8M6 5l6 6M11 5l-7 7', G, 1.200) + c(3, 13, 2, 'none', G) + c(8, 13, 2, 'none', G),
  yel: c(8.500, 8.500, 5.500, '#887') + ball(8, 8, 5.300, '#e8d838'), grey: c(8.500, 8.500, 5.500, '#444') + ball(8, 8, 5.300, '#b0b0b4'), teal: c(8.500, 8.500, 5.500, '#244') + ball(8, 8, 5.300, '#1f7a80'),
  start: '<defs><radialGradient id="sg" cx=".5" cy=".9" r=".9"><stop offset="0" stop-color="#4ec3e8"/><stop offset=".5" stop-color="#1d4f78"/><stop offset="1" stop-color="#9db4c4"/></radialGradient></defs>' + c(22, 21, 20, 'url(#sg)', '#16324e') + p('M12 13q5-4 10-1l-2 8q-5-3-10 0z', 'none', 0, '#f0662a') + p('M24 13q5 3 10 0l-3 8q-5 3-9 0z', 'none', 0, '#8cc63f') + p('M10 22q5-3 10 0l-2 9q-5-3-10 0z', 'none', 0, '#3fa9f5') + p('M22 23q5 3 9 0l-2 8q-5 3-9 0z', 'none', 0, '#fcc419'),
  ie: '<circle cx="21" cy="22" r="11" fill="none" stroke="#1258a4" stroke-width="8"/><circle cx="21" cy="22" r="11" fill="none" stroke="#2f8fdc" stroke-width="4"/>' + p('M12 22h20', '#2f8fdc', 5) + p('M24 27h12', '#2e74b3', 3.500) + p('M4 38C-2 30 20 2 34 3c5 1 2 8 0 10', '#efc544', 3),
  explorer: p('M2 4h9l3-3h8l2 4h12v30H2z', '#c89a38', 1, '#f3dc88') + r(6, 4, 10, 6, '#fff', '#4a9') + r(22, 6, 12, 6, '#fff', '#c85') + p('M2 12h34v23H2z', '#d8b050', 1, '#f8e8a8') + p('M10 37V27q0-4 5-4h11q5 0 5 4v10', '#8cc4e8', 5) + p('M10 37V27q0-4 5-4h11q5 0 5 4v10', '#d4ecfa', 2),
  wmp: p('M2 3h22v26l-22 0z', '#6a9cc8', 1, '#a8cce8') + p('M25 4l4 1v23l-4 1z', '#5a8cb8', 1, '#88b4d8') + c(14, 16, 10.500, '#e8641c', '#fff') + p('M10 9l10 7-10 7z', 'none', 0, '#fff'),
  chrome: c(19, 19, 18, '#e0aa20') + p('M19 19L3.400 10A18 18 0 0 1 34.600 10z', 'none', 0, '#d03a2c') + p('M19 10h16.500a18 18 0 0 0-32-.5L11 22z', 'none', 0, '#d03a2c') + p('M3.400 10a18 18 0 0 0 14.600 27L26 24l-14 0z', 'none', 0, '#2f9a4a') + p('M35 10H19l8 13-9 14A18 18 0 0 0 35 10z', 'none', 0, '#f4c030') + c(19, 19, 8.500, '#fff') + c(19, 19, 6.500, '#3f7de8'),
};
document.querySelectorAll('[data-icon]').forEach(e => e.innerHTML = I[e.dataset.icon]);
const svg = n => `<svg class="h-[22px] w-[22px] shrink-0 overflow-visible" viewBox="-0.5 -0.5 17 17">${I[n]}</svg>`;
const btn = n => `<button aria-label="${n}" class="flex h-[27px] w-[27px] shrink-0 items-center justify-center">${svg(n)}</button>`;
const tri = f => `<svg class="h-[6px] w-[11px] shrink-0" viewBox="0 0 11 6"><path d="M0 0h11L5.500 6z" fill="${f}"/></svg>`;
const item = s => s === '|' ? '<span class="flex h-[24px] w-[10px] shrink-0 justify-center"><span class="w-px bg-[#9a9a9a]"></span></span>'
  : s === 'v' || s === 'w' ? `<button aria-label="More" class="flex h-[27px] w-[21px] shrink-0 items-center justify-center">${tri(s === 'v' ? '#000' : '#959595')}</button>`
  : s === 'ptr' ? '<button aria-label="Select" class="flex h-[27px] w-[27px] shrink-0 items-center justify-center border border-b-white border-l-[#888] border-r-white border-t-[#888] bg-[#f8f8f8]">' + svg('ptr') + '</button>' : btn(s);
const grip = first => `<span class="${first ? 'w-[9px]' : 'w-[14px] pl-[5px]'} flex h-[22px] shrink-0 flex-col justify-between"><i class="ml-px h-[3px] w-[3px] bg-[#b4b4b4]"></i><i class="ml-px h-[3px] w-[3px] bg-[#b4b4b4]"></i><i class="ml-px h-[3px] w-[3px] bg-[#b4b4b4]"></i><i class="ml-px h-[3px] w-[3px] bg-[#b4b4b4]"></i></span>`;
const rows = [
  ['page v save | open web docin | print | undo v redo w cut copy paste', 'ptr rot zoom move | home target v fit disp', 'pencil gc w pring v pzig v | measure v atoms v | sym hh v tablei v dash w redm v', 's1 s2 s3'],
  ['bars w gaz gza', 'bk fw hand | calc w bars w gaz gza yy w lock unlock', 'xy v fx', 'gptr gzoom gmove peaks treeh | ghome', '*d1 d2 d3 d4 d5 d6 d7 d8 calcn d10 d11 d12 d13 d14 d15 d16 d17 d18 d19 d20 d21 d22 d23'],
  ['l1 l2 l3 l4 l5 | l6 l7 v', 'b1 b2 v b3 v b4 v', 'g1 play g3 w', 'h1 h2 h3 h4 h5 w h6 w h7 h8 w h9', 'k1 k2 k3 k4 play k6 | k7 w', 'cab1 cab'],
];
document.getElementById('bars').innerHTML = rows.map((row, ri) =>
  `<div role="toolbar" class="flex ${['h-[33px]', 'h-[34px]', 'h-[34px]'][ri]} border-b border-[#9b9b9b] ${ri === 1 ? 'pr-[7px]' : ''}">` + row.map((g, i) => g[0] === '*'
    ? `<div class="flex min-w-0 flex-1 items-center border-r border-t border-r-[#8d8d8d] border-t-white bg-[#eeeeee]">${grip(false)}` + g.slice(1).split(' ').map(n => `<button aria-label="${n}" class="flex min-w-0 flex-1 items-center justify-center">${svg(n)}<svg class="h-[6px] w-[11px] shrink-0" viewBox="0 0 11 6"><path d="M0 0h11L5.500 6z"/></svg></button>`).join('') + '</div>'
    : `<div class="flex shrink-0 items-center border-r border-t border-r-[#8d8d8d] border-t-white bg-[#eeeeee] pr-[3px]">${grip(i === 0)}${g.split(' ').map(item).join('')}</div>`).join('') + '</div>').join('');
document.getElementById('projbar').innerHTML = 'newdoc del gfold | refresh az v | book'.split(' ').map(item).join('');
document.getElementById('jobbar').innerHTML = `<div class="mb-[4px] w-[43px] border-b border-[#9a9a9a] pb-[2px]"><button aria-label="Refresh jobs" class="-mt-[3px] block">${svg('refresh')}</button></div>` + ['j2', 'j3', 'j4', 'j5'].map(n => `<button aria-label="${n}" class="h-[26px] w-[22px]">${svg(n)}</button>`).join('');
document.getElementById('jobhead').innerHTML = ['Descript...', 'Job Id', 'Gateway', 'Server', 'Status', 'Progress', 'Start Time', 'Results ...', ''].map(h => `<th scope="col" class="${h ? 'border-r-2 border-[#6d6d6d]' : ''} pl-[9px] text-left font-normal leading-[22px]">${h}</th>`).join('');

const dot = d => `<path d="${d}" stroke="#777" stroke-dasharray="1 1" fill="none"/>`;
const tree = [['mol', 'reactant.xsd', 3], ['txt', 'Status.txt', 3], ['chart', '1 Convergence.xcd', 3], ['chart', '1 Energies.xcd', 3], ['outmol', '1.outmol', 3, 'end'], ['folder', '2 DMol3 GeomOpt', 2, 'box'], ['calcn', '2 - Calculation', 3], ['blank', '2.input', 3], ['xtd', '2.xtd', 3], ['mol', 'product.xsd', 3, 'sel'], ['chart', '2 Convergence.xcd', 3], ['chart', '2 Energies.xcd', 3], ['txt', 'Status.txt', 3], ['outmol', '2.outmol', 3, 'end'], ['mol', '1.xsd', 2], ['mol', '2.xsd', 2]];
document.getElementById('tree').innerHTML = tree.map(([ic, name, d, k]) => {
  const w = d === 3 ? 67 : 44;
  const g = dot('M10.500 0v24') + dot('M33.500 0v24') + (d === 3 ? dot(`M56.500 0v${k === 'end' ? 12 : 24}M56 12.500h12`) : dot('M33 12.500h12')) + (k === 'box' ? '<rect x="28.500" y="7.500" width="10" height="10" fill="#fff" stroke="#888"/><path d="M31 12.500h5" stroke="#222"/>' : '');
  return `<li class="flex h-[24px] items-center"><svg class="h-[24px] shrink-0" style="width:${w}px" viewBox="0 0 ${w} 24">${g}</svg><svg class="h-[20px] w-[20px] shrink-0" viewBox="-0.5 -0.5 17 17">${I[ic]}</svg><span class="ml-[4px] whitespace-nowrap px-[2px] leading-[22px] ${k === 'box' ? 'font-bold text-black' : ''} ${k === 'sel' ? 'bg-[#ececec]' : ''} ${ic === 'calcn' ? 'text-[#2548c8]' : ''}">${name}</span></li>`;
}).join('');

const prow = ([n, v, k], hs) => `<tr class="${hs} border-b border-[#d4d7da]"><th scope="row" class="overflow-hidden whitespace-nowrap border-r border-[#d4d7da] py-0 pl-[22px] text-left text-[13px] font-normal ${k === 'sel' ? 'bg-[#3d95f2] text-white' : k === 'dim' ? 'text-[#808080]' : ''}">${n}</th><td class="overflow-hidden whitespace-nowrap py-0 pl-[4px] ${v[0] === '(' ? 'text-[15px]' : ''}">${v}</td></tr>`;
document.getElementById('props1').innerHTML = [['Charge', '0.000000', 'sel'], ['Color', '<span class="mr-[9px] inline-block h-[14px] w-[14px] border border-black align-middle"></span>RGB(255, 255, 255)'], ['Composition', 'H'], ['ElementName', 'Hydrogen', 'dim'], ['ElementSymbol', 'H'], ['Force', '(1.43247, -0.849048, 0.471957)'], ['ForcefieldType', ''], ['FormalCharge', '0'], ['FormalSpin', '0']].map(a => prow(a, 'odd:h-[22px] even:h-[21px]')).join('');
document.getElementById('props2').innerHTML = [['FormalSpinDirection', 'Undefined'], ['FormalSpinState', 'Undefined'], ['FormalSpinVector', '(0.000000, 0.000000, 0.000000)', 'dim'], ['Hybridization', 'No hybridization'], ['IsBackboneAtom', 'No'], ['IsHidden', 'No'], ['IsInDisplayRange', 'Yes'], ['IsIsotope', '']].map(a => prow(a, 'odd:h-[23px] even:h-[22px]')).join('');

const box = (x, plus) => `<rect x="${x - 4.5}" y="5.500" width="9" height="9" fill="#fff" stroke="#444"/><path d="M${x - 2.5} 10h5${plus ? `M${x} 7.500v5` : ''}" stroke="#222"/>`;
const atoms = (last, ball, sel) => [
  [24, dot('M10.500 10v9M15 10.500h9') + box(10, true), 'folderG', '5 matched atoms', ''],
  [24, dot('M10.500 0v6M15 10.500h9') + box(10), 'folderR', '2 unmatched atoms', ''],
  [46, dot('M33.500 0v6M38 10.500h9') + box(33), 'folderO', '2xH', ''],
  [68, dot('M56.500 0v19M57 10.500h12'), 'yel', '5:H', sel],
  [68, dot('M56.500 0v10M57 10.500h12'), ball, last, 'px-[5px]'],
].map(([w, g, ic, s, cl]) => `<li class="flex h-[19px] items-center"><svg class="h-[19px] shrink-0" style="width:${w}px" viewBox="0 0 ${w} 19">${g}</svg><svg class="h-[19px] w-[19px] shrink-0" viewBox="-0.5 -0.5 17 17">${I[ic]}</svg><span class="ml-[5px] whitespace-nowrap leading-[17px] ${cl}">${s}</span></li>`).join('');
document.getElementById('atoms1').innerHTML = atoms('7:H', 'grey', 'border border-dotted border-[#102a50] bg-[#2f8ff0] px-[4px] text-white');
document.getElementById('atoms2').innerHTML = atoms('6:H', 'teal', 'bg-[#ececec] px-[5px]');
</script>
</body>
</html>
